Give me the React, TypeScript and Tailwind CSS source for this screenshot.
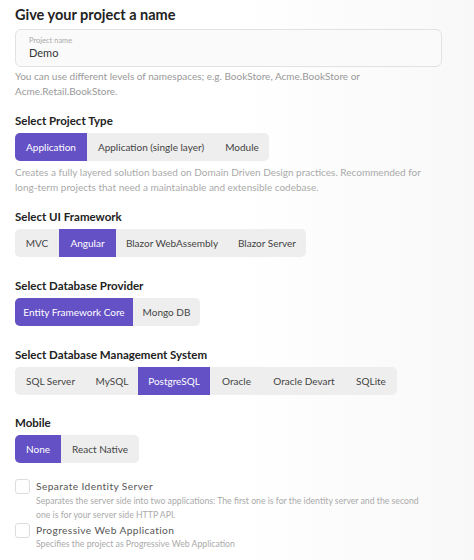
import { useState } from 'react'

interface Option {
  label: string
  w: string
}

interface SegmentProps {
  options: Option[]
  value: string
  onChange: (v: string) => void
}

function Segment({ options, value, onChange }: SegmentProps) {
  return (
    <div className="inline-flex h-[28px] self-start overflow-hidden rounded-[5px] bg-[#eeeeee]">
      {options.map((opt) => (
        <button
          key={opt.label}
          onClick={() => onChange(opt.label)}
          className={`${opt.w} whitespace-nowrap text-center text-[10px] leading-none ${
            value === opt.label ? 'bg-[#6451c6] text-white' : 'text-[#444]'
          }`}
        >
          {opt.label}
        </button>
      ))}
    </div>
  )
}

function Section({ title, className = '', children }: { title: string; className?: string; children: React.ReactNode }) {
  return (
    <div className={`flex flex-col ${className}`}>
      <h3 className="mb-[5px] text-[11.5px] font-bold leading-[14px] text-[#222]">{title}</h3>
      {children}
    </div>
  )
}

export default function App() {
  const [name, setName] = useState('Demo')
  const [projectType, setProjectType] = useState('Application')
  const [ui, setUi] = useState('Angular')
  const [db, setDb] = useState('Entity Framework Core')
  const [dbms, setDbms] = useState('PostgreSQL')
  const [mobile, setMobile] = useState('None')
  const [separate, setSeparate] = useState(false)
  const [pwa, setPwa] = useState(false)

  return (
    <div
      className="h-[560px] w-[474px] overflow-hidden bg-gradient-to-r from-white via-white to-[#f8f8f8] px-[15px] pt-[5px]"
      style={{ fontFamily: 'Lato, "Open Sans", sans-serif' }}
    >
      {/* Project name */}
      <h2 className="text-[14.5px] font-bold leading-[20px] text-[#222]">Give your project a name</h2>
      <div className="mt-[4px] flex h-[38px] w-[427px] flex-col justify-center rounded-[6px] border border-[#e2e2e2] bg-[#fafafa] px-[13px]">
        <span className="text-[7.5px] leading-[10px] text-[#aaa]">Project name</span>
        <input
          value={name}
          onChange={(e) => setName(e.target.value)}
          className="bg-transparent text-[11px] leading-[14px] text-[#333] outline-none"
        />
      </div>
      <p className="mt-[2px] whitespace-nowrap text-[10px] leading-[15px] text-[#999]">
        You can use different levels of namespaces; e.g. BookStore, Acme.BookStore or
        <br />
        Acme.Retail.BookStore.
      </p>

      <Section title="Select Project Type" className="mt-[15px]">
        <Segment
          options={[
            { label: 'Application', w: 'w-[72px]' },
            { label: 'Application (single layer)', w: 'w-[128px]' },
            { label: 'Module', w: 'w-[54px]' },
          ]}
          value={projectType}
          onChange={setProjectType}
        />
        <p className="mt-[4px] whitespace-nowrap text-[10px] leading-[15px] text-[#aaa]">
          Creates a fully layered solution based on Domain Driven Design practices. Recommended for
          <br />
          long-term projects that need a maintainable and extensible codebase.
        </p>
      </Section>

      <Section title="Select UI Framework" className="mt-[15px]">
        <Segment
          options={[
            { label: 'MVC', w: 'w-[44px]' },
            { label: 'Angular', w: 'w-[57px]' },
            { label: 'Blazor WebAssembly', w: 'w-[112px]' },
            { label: 'Blazor Server', w: 'w-[78px]' },
          ]}
          value={ui}
          onChange={setUi}
        />
      </Section>

      <Section title="Select Database Provider" className="mt-[22px]">
        <Segment
          options={[
            { label: 'Entity Framework Core', w: 'w-[118px]' },
            { label: 'Mongo DB', w: 'w-[67px]' },
          ]}
          value={db}
          onChange={setDb}
        />
      </Section>

      <Section title="Select Database Management System" className="mt-[22px]">
        <Segment
          options={[
            { label: 'SQL Server', w: 'w-[71px]' },
            { label: 'MySQL', w: 'w-[52px]' },
            { label: 'PostgreSQL', w: 'w-[72px]' },
            { label: 'Oracle', w: 'w-[53px]' },
            { label: 'Oracle Devart', w: 'w-[82px]' },
            { label: 'SQLite', w: 'w-[52px]' },
          ]}
          value={dbms}
          onChange={setDbms}
        />
      </Section>

      <Section title="Mobile" className="mt-[21px]">
        <Segment
          options={[
            { label: 'None', w: 'w-[46px]' },
            { label: 'React Native', w: 'w-[78px]' },
          ]}
          value={mobile}
          onChange={setMobile}
        />
      </Section>

      {/* Options */}
      <div className="mt-[16px] flex flex-col">
        <label className="flex gap-[6px]">
          <input
            type="checkbox"
            checked={separate}
            onChange={(e) => setSeparate(e.target.checked)}
            className="h-[15px] w-[15px] shrink-0 appearance-none rounded-[3px] border border-[#ddd] bg-white checked:bg-[#6451c6]"
          />
          <div className="flex flex-col">
            <span className="text-[10.2px] leading-[14.5px] tracking-[0.4px] text-[#555]">Separate Identity Server</span>
            <span className="whitespace-nowrap text-[8.7px] leading-[14.5px] text-[#aaa]">
              Separates the server side into two applications: The first one is for the identity server and the second
              <br />
              one is for your server side HTTP API.
            </span>
          </div>
        </label>
        <label className="flex gap-[6px]">
          <input
            type="checkbox"
            checked={pwa}
            onChange={(e) => setPwa(e.target.checked)}
            className="h-[15px] w-[15px] shrink-0 appearance-none rounded-[3px] border border-[#ddd] bg-white checked:bg-[#6451c6]"
          />
          <div className="flex flex-col">
            <span className="text-[10.2px] leading-[14.5px] tracking-[0.4px] text-[#555]">Progressive Web Application</span>
            <span className="text-[8.7px] leading-[14.5px] text-[#aaa]">
              Specifies the project as Progressive Web Application
            </span>
          </div>
        </label>
      </div>
    </div>
  )
}
